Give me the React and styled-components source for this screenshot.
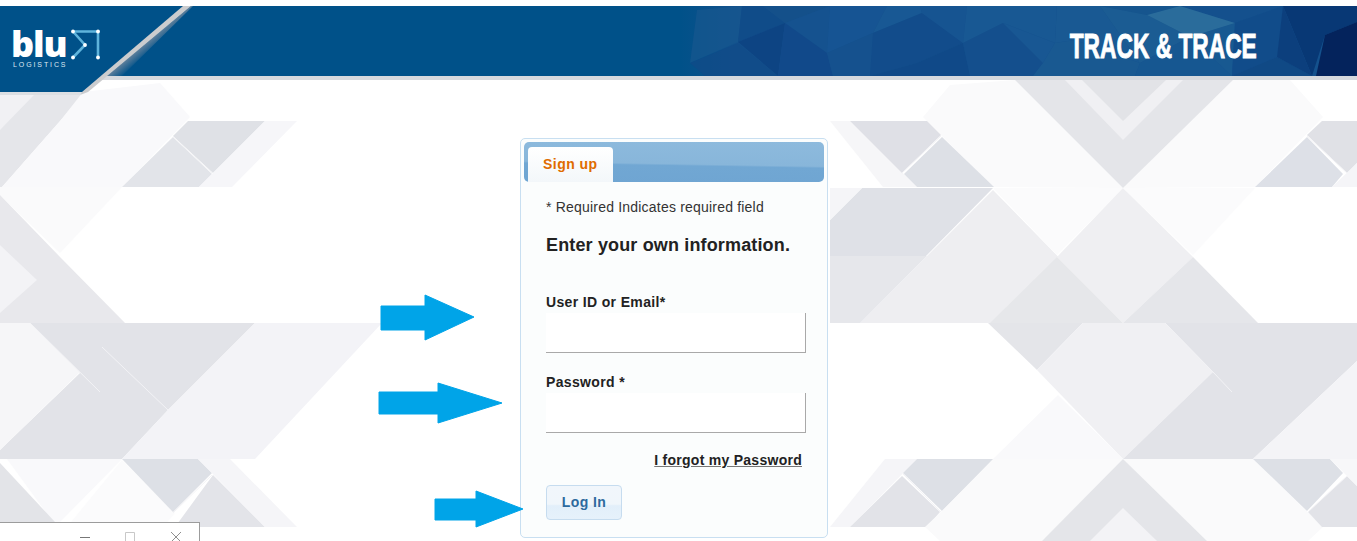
import React from 'react';
import styled, { createGlobalStyle } from 'styled-components';

const GlobalStyle = createGlobalStyle`
  html, body {
    margin: 0;
    padding: 0;
    background: #fff;
  }
  body {
    font-family: "Liberation Sans", Arial, sans-serif;
  }
`;

// facets of the grey backdrop: [fill, points]
const backdrop = [
  ['#e5e6ea', '0,95 83,95 2,187 0,187'],
  ['#f1f1f4', '0,95 34,95 0,130'],
  ['#f9f9fb', '83,92 160,83 190,117 122,187 2,187 60,121'],
  ['#dfe1e6', '188,121 265,121 213,173 173,136'],
  ['#e2e4e9', '173,137 212,174 199,187 122,187'],
  ['#f6f6f9', '265,121 297,121 232,187 199,187'],
  ['#fafafb', '0,187 122,187 60,253 0,195'],
  ['#e8e8ec', '0,195 60,257 125,323 0,323'],
  ['#f3f3f6', '0,245 37,280 0,313'],
  ['#e2e3e8', '125,323 255,323 168,410 122,459 0,459 0,450 80,373 30,323'],
  ['#f6f6f8', '0,323 30,323 100,392 80,372 0,450'],
  ['#f3f3f7', '255,323 382,323 255,459 122,459 168,410'],
  ['#f9f9fb', '7,459 122,459 60,522 53,522'],
  ['#e3e4e8', '0,463 55,522 55,527 0,527'],
  ['#fbfbfc', '122,460 175,513 163,527 67,527'],
  ['#dde0e6', '122,459 198,459 212,473 173,512'],
  ['#e3e4e9', '213,475 265,527 175,527'],
  ['#f5f5f8', '198,459 230,459 297,527 265,527'],

  ['#fafafb', '950,85 1015,80 1123,188 993,187 923,117'],
  ['#fafafb', '1233,80 1290,80 1323,117 1255,187 1123,188'],
  ['#e4e5e9', '1015,80 1233,80 1123,188'],
  ['#f0f0f3', '1065,80 1123,140 1183,80'],
  ['#e2e3e7', '1082,80 1123,121 1166,80'],
  ['#f6f6f8', '830,121 850,121 917,187 883,187'],
  ['#dfe0e6', '850,121 927,121 941,135 902,173'],
  ['#dde0e6', '942,137 994,187 917,187 904,174'],
  ['#e0e1e6', '1322,121 1357,121 1357,163 1347,173 1307,135'],
  ['#dde0e7', '1307,137 1343,174 1332,187 1255,187'],
  ['#f5f5f8', '1332,187 1350,170 1357,163 1357,187'],

  ['#dfe1e7', '830,220 862,188 993,188 860,323 830,323'],
  ['#e6e7eb', '830,256 927,256 860,323 830,323'],
  ['#f5f5f8', '830,188 862,188 830,220'],
  ['#eeeef1', '993,190 1123,323 860,323'],
  ['#fbfbfc', '993,188 1123,188 1057,255'],
  ['#e6e7ea', '1057,257 1123,323 990,323'],
  ['#efeff2', '1123,188 1193,257 1123,323 1057,257'],
  ['#fbfbfc', '1123,188 1255,188 1193,255'],
  ['#e5e6ea', '1193,257 1258,323 1123,323'],

  ['#e4e5e9', '988,323 1083,323 1037,370'],
  ['#f0f0f3', '1083,323 1165,323 1213,372 1123,459 1037,370'],
  ['#e2e3e8', '1165,323 1357,323 1357,361 1253,459 1123,459 1213,372'],
  ['#f9f9fb', '1058,395 1123,459 993,459'],
  ['#f4f4f7', '1357,361 1357,459 1253,459'],

  ['#f5f5f8', '885,459 917,459 850,527 830,527'],
  ['#dde0e6', '917,459 994,459 942,511 903,473'],
  ['#e2e3e8', '902,476 940,512 927,527 850,527'],
  ['#fafafb', '993,459 1123,459 1042,541 940,541 925,527 942,511'],
  ['#fafafb', '1123,459 1253,459 1323,527 1308,541 1207,541'],
  ['#e4e5e9', '1123,459 1207,541 1042,541'],
  ['#f3f3f6', '1123,508 1157,541 1090,541'],
  ['#dde0e6', '1253,459 1330,459 1343,473 1307,511'],
  ['#e2e3e8', '1308,512 1347,476 1357,486 1357,527 1322,527'],
  ['#f7f7f9', '1330,459 1357,459 1357,486 1347,476'],
];

// thin light seams between the facets
const seams = [
  '173,137 212,173',
  '30,323 100,392',
  '102,347 168,410',
  '173,513 212,475',
  '902,173 941,136',
  '903,474 941,512',
  '1083,323 1037,370',
  '1165,323 1213,372 1232,392',
  '1307,136 1347,173',
  '1308,512 1347,476',
];

// facets of the blue banner, in page coordinates
const bannerFacets = [
  ['#17578f', '697,10 742,6 738,42 690,63'],
  ['#0f4a88', '742,6 763,6 785,23 738,42'],
  ['#0b3f80', '738,42 785,23 778,76'],
  ['#114a88', '690,63 738,43 778,76 705,76'],
  ['#155089', '763,6 830,6 785,23'],
  ['#165391', '785,23 830,6 827,53'],
  ['#10478a', '785,23 827,53 833,76 778,76'],
  ['#185696', '830,6 887,6 873,33 827,53'],
  ['#16528f', '827,53 873,33 870,76 833,76'],
  ['#1a5c97', '887,6 920,6 922,13 873,33'],
  ['#124b8b', '873,33 922,13 963,43 917,63 870,76'],
  ['#0f4786', '917,63 963,43 970,76 870,76'],
  ['#185694', '920,6 967,6 963,43 922,13'],
  ['#1b5b96', '967,6 1057,6 1055,43 1003,23 963,43'],
  ['#144f8e', '963,43 1003,23 1043,63 1033,76 970,76'],
  ['#1a5a96', '1003,23 1055,43 1043,63'],
  ['#1c5d96', '1057,6 1100,6 1140,63 1075,40 1055,43'],
  ['#1c5d94', '1055,43 1075,40 1140,63 1135,76 1033,76 1043,63'],
  ['#17588f', '1100,6 1180,6 1147,15'],
  ['#1f6296', '1100,6 1147,15 1190,37 1140,63'],
  ['#185a94', '1140,63 1190,37 1232,76 1135,76'],
  ['#1a5d94', '1190,37 1235,23 1232,76'],
  ['#14508d', '1180,6 1283,6 1235,23'],
  ['#114a8a', '1235,23 1283,6 1277,57 1232,76'],
  ['#0f4683', '1277,57 1312,76 1232,76'],
];

// the stronger highlight and the dark right end keep their full colour
const bannerAccents = [
  ['#2a6c9b', '1147,15 1180,6 1235,23 1190,37'],
  ['#083875', '1283,6 1357,6 1357,22 1325,35 1312,76'],
  ['#0c3f7d', '1283,6 1312,76 1277,57'],
  ['#04235c', '1325,35 1357,22 1357,76 1316,76'],
];

const Page = styled.div`
  position: relative;
  height: 541px;
  overflow: hidden;
`;

const Backdrop = styled.svg`
  position: absolute;
  left: 0;
  top: 0;
`;

const Banner = styled.header`
  position: relative;
  margin-top: 6px;
  height: 70px;
  display: flex;
  justify-content: space-between;
  background: #005189;
  border-bottom: 4px solid #d6d9de;
`;

const BannerArt = styled.svg`
  position: absolute;
  left: 0;
  top: 0;
  overflow: visible;
`;

const Brand = styled.div`
  position: relative;
  display: flex;
  align-items: flex-start;
  margin: 21px 0 0 11px;
`;

const BrandText = styled.div`
  display: flex;
  flex-direction: column;
  width: 55px;
`;

const BrandWord = styled.span`
  font-family: "Open Sans", sans-serif;
  font-weight: 800;
  font-size: 36px;
  line-height: 34px;
  letter-spacing: -1.2px;
  color: #fff;
`;

const BrandSub = styled.span`
  font-size: 7px;
  line-height: 8px;
  margin-left: 2px;
  letter-spacing: 1.9px;
  color: #dfeaf3;
  white-space: nowrap;
`;

const BrandMark = styled.svg`
  display: block;
`;

const Title = styled.h1`
  position: relative;
  margin: 22px 100px 0 0;
  font-weight: 700;
  font-size: 35px;
  line-height: 35px;
  color: #fff;
  white-space: nowrap;
  -webkit-text-stroke: 0.9px #fff;
  transform: scaleX(0.65);
  transform-origin: right center;
`;

const Main = styled.main`
  position: relative;
  padding: 58px 0 0 520px;
`;

const Panel = styled.section`
  width: 300px;
  height: 392px;
  padding: 3px;
  background: #fbfdfd;
  border: 1px solid #c8dff1;
  border-radius: 5px;
`;

const TabBar = styled.div`
  display: flex;
  align-items: flex-end;
  height: 40px;
  padding-left: 4px;
  border-radius: 5px;
  background: linear-gradient(181deg, #8dbadd 0%, #88b6da 54%, #71a7d3 58%, #6fa5d2 100%);
`;

const Tab = styled.div`
  width: 70px;
  height: 27px;
  padding: 8px 0 0 15px;
  font-weight: 700;
  font-size: 14px;
  line-height: 18px;
  letter-spacing: 0.45px;
  color: #e06c00;
  background: linear-gradient(#ffffff, #f3f7fa);
  border-radius: 4px 4px 0 0;
`;

const Body = styled.div`
  display: flex;
  flex-direction: column;
  padding: 0 18px 0 22px;
`;

const Hint = styled.p`
  margin: 16px 0 0;
  font-size: 14px;
  line-height: 18px;
  letter-spacing: 0.2px;
  color: #333;
`;

const Heading = styled.h2`
  margin: 18px 0 0;
  font-size: 18px;
  line-height: 22px;
  font-weight: 700;
  letter-spacing: 0.15px;
  color: #222;
`;

const Label = styled.label`
  display: block;
  margin-top: ${props => props.$gap}px;
  font-size: 14px;
  line-height: 18px;
  font-weight: 700;
  letter-spacing: 0.35px;
  color: #222;
`;

const Field = styled.input`
  display: block;
  width: 260px;
  height: 40px;
  margin-top: 2px;
  padding: 0 4px;
  box-sizing: border-box;
  background: #fff;
  border: 0;
  border-right: 1px solid #a9a9a9;
  border-bottom: 1px solid #a9a9a9;
  outline: none;
`;

const ForgotLink = styled.a`
  align-self: flex-end;
  margin: 18px 4px 0 0;
  font-size: 14px;
  line-height: 18px;
  font-weight: 700;
  letter-spacing: 0.27px;
  color: #222;
  text-decoration: underline;
  text-decoration-color: #777;
`;

const LoginButton = styled.button`
  align-self: flex-start;
  width: 76px;
  height: 35px;
  margin-top: 16px;
  padding: 0 0 2px;
  font-family: inherit;
  font-size: 14px;
  font-weight: 700;
  letter-spacing: 0.4px;
  color: #2d6a9e;
  background: linear-gradient(#f1f6fb, #f0f6fb 55%, #e2effa 60%, #e6f1fb);
  border: 1px solid #c6dcef;
  border-radius: 4px;
`;

const Arrow = styled.svg`
  position: absolute;
  left: 0;
  top: 0;
  pointer-events: none;
`;

const WindowStub = styled.div`
  position: absolute;
  left: 0;
  top: 522px;
  width: 199px;
  height: 19px;
  background: #fff;
  border-top: 1px solid #9c9c9c;
  border-right: 1px solid #9c9c9c;
`;

const WindowIcons = styled.svg`
  display: block;
`;

const arrows = [
  '381,306 425,306 425,295 474,317 425,340 425,330 381,330',
  '379,392 438,392 438,383 502,403 438,423 438,414 379,414',
  '435,499 476,499 476,491 523,509 476,527 476,520 435,520',
];

const App = () => {
  return (
    <Page>
      <GlobalStyle />
      <Backdrop width="1357" height="541" viewBox="0 0 1357 541">
        {backdrop.map(([fill, points]) => (
          <polygon key={points} fill={fill} points={points} />
        ))}
        {seams.map(points => (
          <polyline key={points} points={points} fill="none" stroke="#f3f3f6" strokeWidth="1" />
        ))}
      </Backdrop>

      <Banner>
        <BannerArt width="1357" height="96" viewBox="0 6 1357 96">
          <defs>
            <linearGradient id="bannerFade" x1="0" x2="1" y1="0" y2="0">
              <stop offset="0" stopColor="#005189" />
              <stop offset="1" stopColor="#14518d" />
            </linearGradient>
            <linearGradient id="foldShade" gradientUnits="userSpaceOnUse" x1="118" y1="60" x2="128" y2="72">
              <stop offset="0" stopColor="#8a94a3" />
              <stop offset="1" stopColor="#005189" />
            </linearGradient>
          </defs>
          <rect x="680" y="6" width="60" height="70" fill="url(#bannerFade)" />
          <rect x="740" y="6" width="617" height="70" fill="#14518d" />
          <g opacity="0.7">
            {bannerFacets.map(([fill, points]) => (
              <polygon key={points} fill={fill} points={points} />
            ))}
          </g>
          {bannerAccents.map(([fill, points]) => (
            <polygon key={points} fill={fill} points={points} />
          ))}
          <polygon fill="url(#foldShade)" points="191,6 193,6 122,76 107,76" />
          <polygon fill="#005189" points="0,76 102,76 83,92 0,92" />
          <polygon fill="#dcdfe3" points="0,92 83,92 80,95 0,95" />
          <polygon fill="#cbccce" points="183,6 191,6 88,92 80,95 82,92" />
        </BannerArt>
        <Brand>
          <BrandText>
            <BrandWord>blu</BrandWord>
            <BrandSub>LOGISTICS</BrandSub>
          </BrandText>
          <BrandMark width="34" height="36" viewBox="0 0 34 36">
            <g fill="none" stroke="#5fb4dc" strokeWidth="2.6">
              <path d="M7 4.5H32V30.5" />
              <path d="M7 4.5L19 18L7 30.5" />
            </g>
            <g fill="#fff">
              <circle cx="7" cy="4.5" r="1.9" />
              <circle cx="32" cy="4.5" r="1.9" />
              <circle cx="19" cy="18" r="1.9" />
              <circle cx="7" cy="30.5" r="1.9" />
              <circle cx="32" cy="30.5" r="1.9" />
            </g>
          </BrandMark>
        </Brand>
        <Title>TRACK &amp; TRACE</Title>
      </Banner>

      <Main>
        <Panel>
          <TabBar>
            <Tab>Sign up</Tab>
          </TabBar>
          <Body>
            <Hint>* Required Indicates required field</Hint>
            <Heading>Enter your own information.</Heading>
            <Label $gap={37} htmlFor="user">User ID or Email*</Label>
            <Field id="user" type="text" />
            <Label $gap={20} htmlFor="pass">Password *</Label>
            <Field id="pass" type="password" />
            <ForgotLink href="#">I forgot my Password</ForgotLink>
            <LoginButton type="button">Log In</LoginButton>
          </Body>
        </Panel>
      </Main>

      <Arrow width="1357" height="541" viewBox="0 0 1357 541">
        {arrows.map(points => (
          <polygon key={points} points={points} fill="#00a4e8" stroke="#00a4e8" strokeWidth="1" strokeLinejoin="round" />
        ))}
      </Arrow>

      <WindowStub>
        <WindowIcons width="199" height="19" viewBox="0 0 199 19">
          <g fill="none" stroke="#8f8f8f" strokeWidth="1">
            <path d="M80 14.5H90" stroke="#777" />
            <path d="M125.5 19V9.5H134.5V19" stroke="#c8c8c8" />
            <path d="M171 9L181 19M181 9L171 19" />
          </g>
        </WindowIcons>
      </WindowStub>
    </Page>
  );
};

export default App;
